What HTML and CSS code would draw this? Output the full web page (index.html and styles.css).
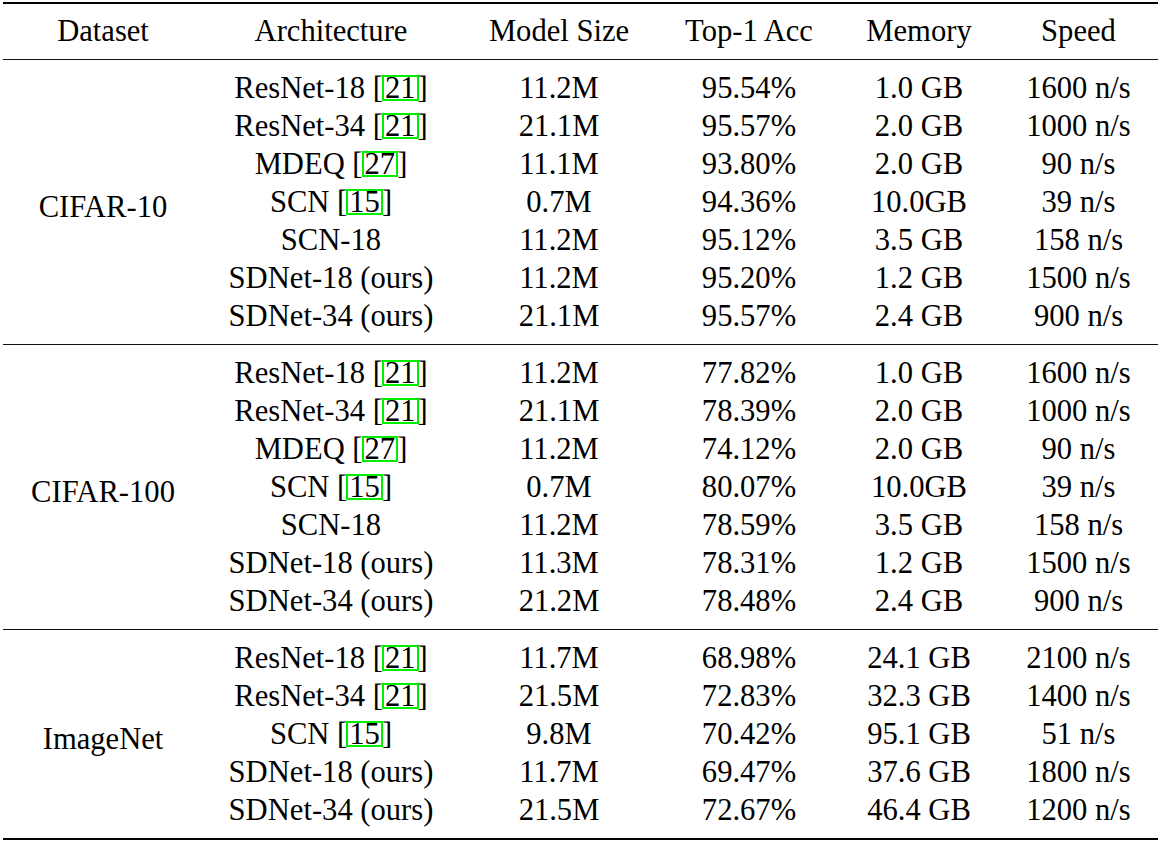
FILE: index.html
```html
<!DOCTYPE html>
<html>
<head>
<meta charset="utf-8">
<link rel="stylesheet" href="styles.css">
</head>
<body>
<table class="results">
  <colgroup>
    <col class="c1"><col class="c2"><col class="c3"><col class="c4"><col class="c5"><col class="c6">
  </colgroup>
  <thead>
    <tr><th>Dataset</th><th>Architecture</th><th>Model Size</th><th>Top-1 Acc</th><th>Memory</th><th>Speed</th></tr>
  </thead>
  <tbody>
    <tr><td class="ds" rowspan="7">CIFAR-10</td><td>ResNet-18 [<span class="cite">21</span>]</td><td>11.2M</td><td>95.54%</td><td>1.0 GB</td><td>1600 n/s</td></tr>
    <tr><td>ResNet-34 [<span class="cite">21</span>]</td><td>21.1M</td><td>95.57%</td><td>2.0 GB</td><td>1000 n/s</td></tr>
    <tr><td>MDEQ [<span class="cite">27</span>]</td><td>11.1M</td><td>93.80%</td><td>2.0 GB</td><td>90 n/s</td></tr>
    <tr><td>SCN [<span class="cite">15</span>]</td><td>0.7M</td><td>94.36%</td><td>10.0GB</td><td>39 n/s</td></tr>
    <tr><td>SCN-18</td><td>11.2M</td><td>95.12%</td><td>3.5 GB</td><td>158 n/s</td></tr>
    <tr><td>SDNet-18 (ours)</td><td>11.2M</td><td>95.20%</td><td>1.2 GB</td><td>1500 n/s</td></tr>
    <tr><td>SDNet-34 (ours)</td><td>21.1M</td><td>95.57%</td><td>2.4 GB</td><td>900 n/s</td></tr>
  </tbody>
  <tbody>
    <tr><td class="ds" rowspan="7">CIFAR-100</td><td>ResNet-18 [<span class="cite">21</span>]</td><td>11.2M</td><td>77.82%</td><td>1.0 GB</td><td>1600 n/s</td></tr>
    <tr><td>ResNet-34 [<span class="cite">21</span>]</td><td>21.1M</td><td>78.39%</td><td>2.0 GB</td><td>1000 n/s</td></tr>
    <tr><td>MDEQ [<span class="cite">27</span>]</td><td>11.2M</td><td>74.12%</td><td>2.0 GB</td><td>90 n/s</td></tr>
    <tr><td>SCN [<span class="cite">15</span>]</td><td>0.7M</td><td>80.07%</td><td>10.0GB</td><td>39 n/s</td></tr>
    <tr><td>SCN-18</td><td>11.2M</td><td>78.59%</td><td>3.5 GB</td><td>158 n/s</td></tr>
    <tr><td>SDNet-18 (ours)</td><td>11.3M</td><td>78.31%</td><td>1.2 GB</td><td>1500 n/s</td></tr>
    <tr><td>SDNet-34 (ours)</td><td>21.2M</td><td>78.48%</td><td>2.4 GB</td><td>900 n/s</td></tr>
  </tbody>
  <tbody>
    <tr><td class="ds" rowspan="5">ImageNet</td><td>ResNet-18 [<span class="cite">21</span>]</td><td>11.7M</td><td>68.98%</td><td>24.1 GB</td><td>2100 n/s</td></tr>
    <tr><td>ResNet-34 [<span class="cite">21</span>]</td><td>21.5M</td><td>72.83%</td><td>32.3 GB</td><td>1400 n/s</td></tr>
    <tr><td>SCN [<span class="cite">15</span>]</td><td>9.8M</td><td>70.42%</td><td>95.1 GB</td><td>51 n/s</td></tr>
    <tr><td>SDNet-18 (ours)</td><td>11.7M</td><td>69.47%</td><td>37.6 GB</td><td>1800 n/s</td></tr>
    <tr><td>SDNet-34 (ours)</td><td>21.5M</td><td>72.67%</td><td>46.4 GB</td><td>1200 n/s</td></tr>
  </tbody>
</table>
</body>
</html>
```

FILE: styles.css
```css
html, body {
  margin: 0;
  padding: 0;
  background: #ffffff;
}

body {
  font-family: "Liberation Serif", "Times New Roman", serif;
  font-size: 30.6px;
  color: #000;
}

.results {
  margin: 2px 0 0 3px;
  width: 1155px;
  table-layout: fixed;
  border-collapse: collapse;
  border-top: 2px solid #000;
  border-bottom: 2px solid #000;
}

.c1 { width: 200px; }
.c2 { width: 256px; }
.c3 { width: 200px; }
.c4 { width: 180px; }
.c5 { width: 160px; }
.c6 { width: 159px; }

.results th,
.results td {
  padding: 0;
  font-weight: normal;
  text-align: center;
  line-height: 38px;
  white-space: nowrap;
  vertical-align: middle;
}

.results thead th {
  padding: 8px 0 9px;
}

.results tbody {
  border-top: 1px solid #111;
}

.results tbody tr:first-child td {
  padding-top: 9px;
}

.results tbody tr:last-child td {
  padding-bottom: 9px;
}

.results tbody td.ds {
  padding: 0;
}

.cite {
  display: inline-block;
  line-height: 22px;
  padding: 0 1px;
  border: 2px solid #00ee00;
  margin: 0 -1px;
}
```
